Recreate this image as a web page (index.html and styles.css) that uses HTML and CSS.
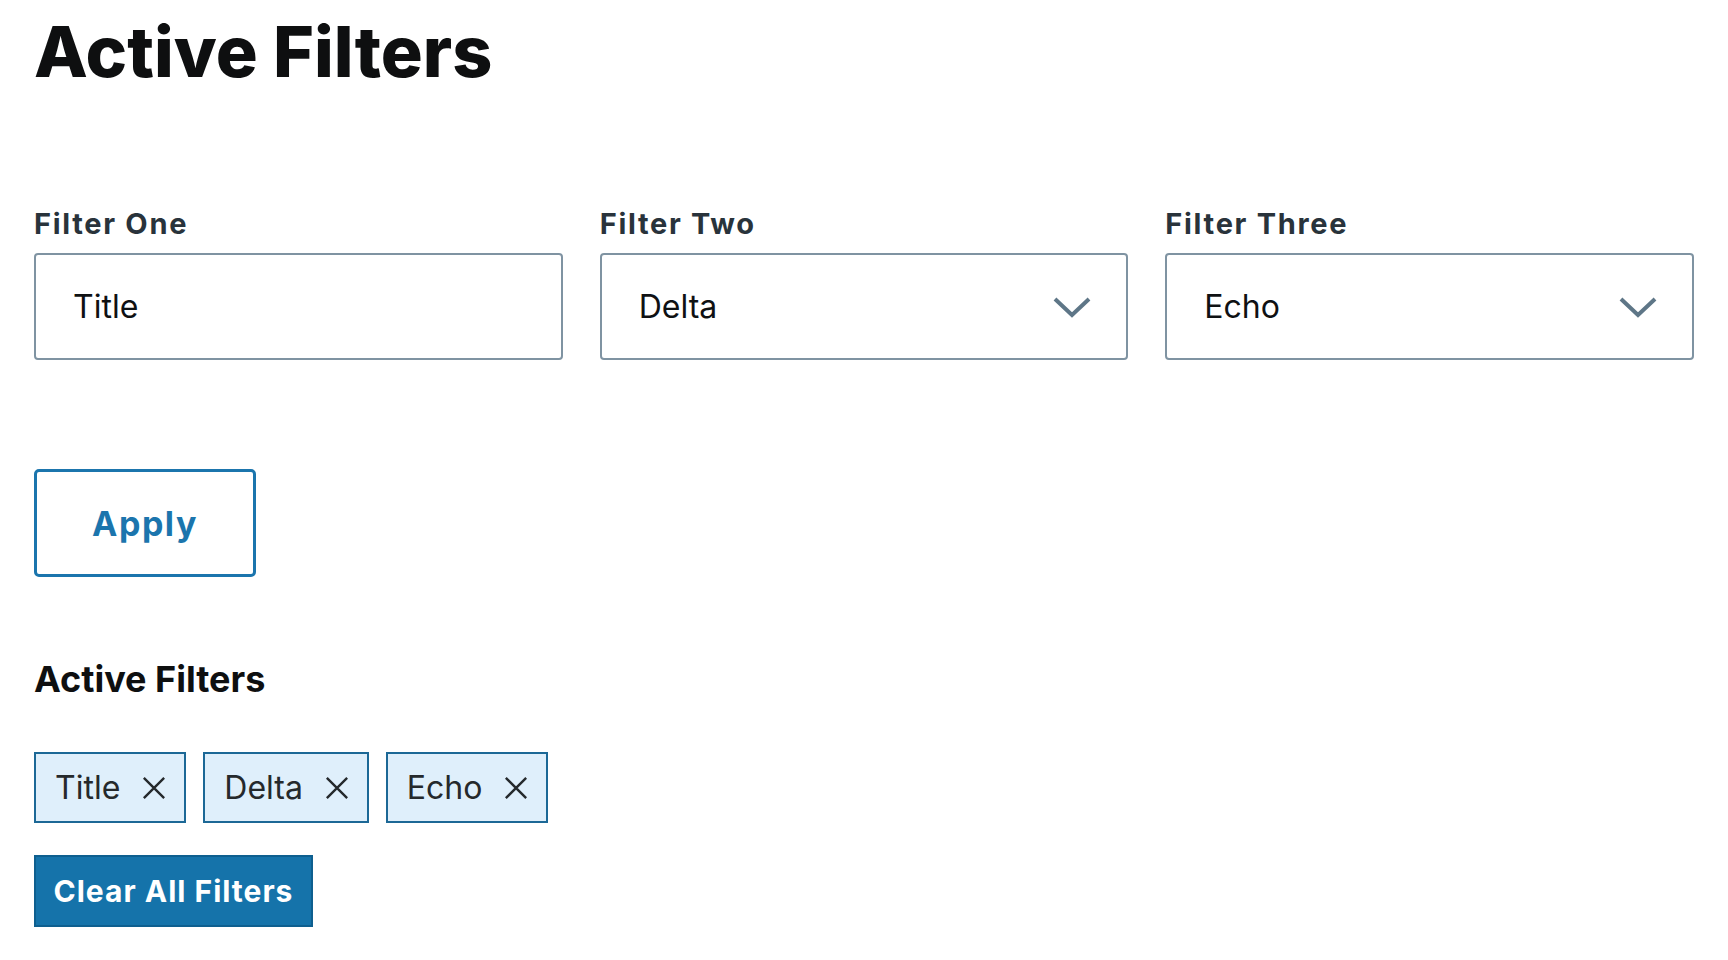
FILE: index.html
```html
<!doctype html>
<html>
    <head>
        <meta charset=utf-8>
        <title>Active Filters</title>
        <link rel="stylesheet" href="styles.css">
    </head>
    <body>
        <h1 class="page-title">Active Filters</h1>

        <form class="filter-form">
            <div class="filter-grid">
                <label class="field">
                    <span class="field-label">Filter One</span>
                    <span class="field-box">
                        <input class="field-input" type=text value="Title">
                    </span>
                </label>
                <label class="field">
                    <span class="field-label">Filter Two</span>
                    <span class="field-box">
                        <span class="field-value">Delta</span>
                        <svg class="chevron" width="40" height="24" viewBox="0 0 40 24"><path d="M3 4 L20 20 L37 4" fill="none" stroke="#5e7687" stroke-width="4"/></svg>
                    </span>
                </label>
                <label class="field">
                    <span class="field-label">Filter Three</span>
                    <span class="field-box">
                        <span class="field-value">Echo</span>
                        <svg class="chevron" width="40" height="24" viewBox="0 0 40 24"><path d="M3 4 L20 20 L37 4" fill="none" stroke="#5e7687" stroke-width="4"/></svg>
                    </span>
                </label>
            </div>

            <button class="apply-button" type=button>Apply</button>
        </form>

        <h2 class="section-title">Active Filters</h2>

        <div class="tag-list">
            <span class="tag">Title
                <svg class="tag-close" width="26" height="26" viewBox="0 0 26 26"><path d="M2 2 L24 24 M24 2 L2 24" stroke="#25292c" stroke-width="2.6"/></svg>
            </span>
            <span class="tag">Delta
                <svg class="tag-close" width="26" height="26" viewBox="0 0 26 26"><path d="M2 2 L24 24 M24 2 L2 24" stroke="#25292c" stroke-width="2.6"/></svg>
            </span>
            <span class="tag">Echo
                <svg class="tag-close" width="26" height="26" viewBox="0 0 26 26"><path d="M2 2 L24 24 M24 2 L2 24" stroke="#25292c" stroke-width="2.6"/></svg>
            </span>
        </div>

        <button class="clear-button" type=button>Clear All Filters</button>
    </body>
</html>
```

FILE: styles.css
```css
body {
    margin: 0;
    padding: 10px 34px 0 34px;
    background: #ffffff;
    color: #0e0f10;
    font-family: "Inter", "Lato", sans-serif;
}

.page-title {
    margin: 0;
    font-size: 70px;
    line-height: 84px;
    font-weight: 800;
    letter-spacing: 0;
    color: #0e0f10;
}

.filter-form {
    margin-top: 112px;
}

/* 3 equal columns */
.filter-grid {
    display: grid;
    grid-template-columns: 1fr 1fr 1fr;
    column-gap: 37px;
}

.field {
    display: flex;
    flex-direction: column;
}

.field-label {
    font-size: 29px;
    line-height: 36px;
    font-weight: 700;
    letter-spacing: 1.7px;
    color: #29333b;
    margin-bottom: 11px;
}

.field-box {
    display: flex;
    align-items: center;
    justify-content: space-between;
    height: 107px;
    box-sizing: border-box;
    border: 2px solid #7f93a2;
    border-radius: 4px;
    padding: 0 34px 0 37px;
}

.field-input,
.field-value {
    font-family: "Inter", "Lato", sans-serif;
    font-size: 32px;
    color: #0f1113;
}

.field-input {
    border: none;
    outline: none;
    padding: 0;
    width: 100%;
    background: transparent;
}

.chevron {
    display: block;
}

.apply-button {
    display: block;
    margin-top: 109px;
    width: 222px;
    height: 108px;
    border: 3px solid #1b75ad;
    border-radius: 5px;
    background: #ffffff;
    color: #1b75ad;
    font-family: "Inter", "Lato", sans-serif;
    font-size: 34px;
    font-weight: 700;
    letter-spacing: 1.5px;
}

.section-title {
    margin: 80px 0 0 0;
    font-size: 36px;
    line-height: 44px;
    font-weight: 700;
    color: #0e0f10;
}

.tag-list {
    display: flex;
    gap: 17px;
    margin-top: 51px;
}

.tag {
    display: flex;
    align-items: center;
    gap: 22px;
    height: 71px;
    box-sizing: border-box;
    padding: 0 18px 0 19px;
    border: 2px solid #1c6896;
    background: #dfeffb;
    font-size: 32px;
    color: #25292c;
}

.tag-close {
    display: block;
    width: 24px;
    height: 24px;
}

.clear-button {
    display: block;
    margin-top: 32px;
    width: 279px;
    height: 72px;
    border: 2px solid #0e5f8f;
    background: #1573aa;
    color: #ffffff;
    font-family: "Inter", "Lato", sans-serif;
    font-size: 30px;
    font-weight: 700;
    letter-spacing: 1px;
}
```
